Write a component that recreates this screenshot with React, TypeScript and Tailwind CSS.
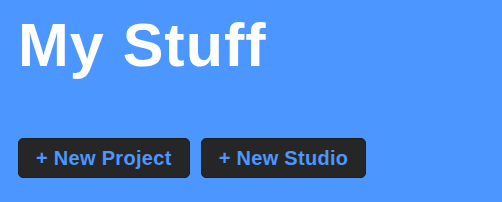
export default function App() {
  return (
    <div
      className="w-[502px] h-[202px] bg-[#4c97ff] pl-[18px] pt-[15px]"
      style={{ fontFamily: '"Liberation Sans", Arial, Helvetica, sans-serif' }}
    >
      <h1 className="text-[61px] leading-none font-bold tracking-[1px] text-white">My Stuff</h1>
      <div className="flex gap-[11px] mt-[62px]">
        <button className="h-10 px-[17px] rounded-[5px] bg-[#262626] border border-[#1e1e1e] text-[#4c97ff] text-[20px] font-bold tracking-[0.3px] leading-none">
          + New Project
        </button>
        <button className="h-10 px-[17px] rounded-[5px] bg-[#262626] border border-[#1e1e1e] text-[#4c97ff] text-[20px] font-bold tracking-[0.3px] leading-none">
          + New Studio
        </button>
      </div>
    </div>
  );
}
